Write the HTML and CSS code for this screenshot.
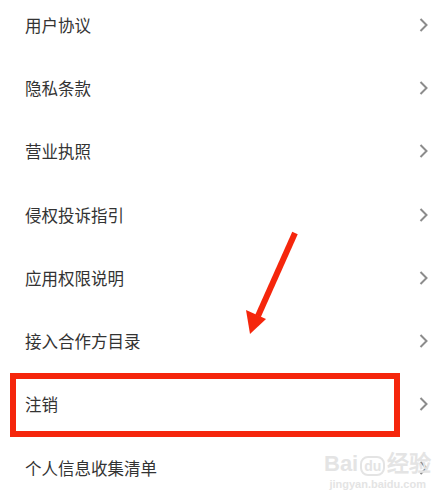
FILE: index.html
```html
<!DOCTYPE html>
<html lang="zh-CN">

<head>
    <meta charset="UTF-8">
    <meta name="viewport" content="width=device-width, initial-scale=1.0">
    <title>设置</title>
    <link rel="stylesheet" href="styles.css">
</head>

<body>
    <ul class="menu">
        <li class="menu-item"><span>用户协议</span><svg class="chevron" viewBox="0 0 9 14"><polyline points="1.5,1 7.5,7 1.5,13" /></svg></li>
        <li class="menu-item"><span>隐私条款</span><svg class="chevron" viewBox="0 0 9 14"><polyline points="1.5,1 7.5,7 1.5,13" /></svg></li>
        <li class="menu-item"><span>营业执照</span><svg class="chevron" viewBox="0 0 9 14"><polyline points="1.5,1 7.5,7 1.5,13" /></svg></li>
        <li class="menu-item"><span>侵权投诉指引</span><svg class="chevron" viewBox="0 0 9 14"><polyline points="1.5,1 7.5,7 1.5,13" /></svg></li>
        <li class="menu-item"><span>应用权限说明</span><svg class="chevron" viewBox="0 0 9 14"><polyline points="1.5,1 7.5,7 1.5,13" /></svg></li>
        <li class="menu-item"><span>接入合作方目录</span><svg class="chevron" viewBox="0 0 9 14"><polyline points="1.5,1 7.5,7 1.5,13" /></svg></li>
        <li class="menu-item"><span>注销</span><svg class="chevron" viewBox="0 0 9 14"><polyline points="1.5,1 7.5,7 1.5,13" /></svg></li>
        <li class="menu-item"><span>个人信息收集清单</span><svg class="chevron" viewBox="0 0 9 14"><polyline points="1.5,1 7.5,7 1.5,13" /></svg></li>
    </ul>

    <!-- annotation overlays -->
    <div class="highlight-box"></div>
    <svg class="arrow" width="443" height="501" viewBox="0 0 443 501">
        <line x1="295" y1="233" x2="258" y2="316" stroke="#f5260c" stroke-width="6" />
        <polygon points="250,334 246,310 266,319" fill="#f5260c" />
    </svg>

    <div class="watermark">
        <div class="wm-logo">Bai<span class="wm-du">du</span>经验</div>
        <div class="wm-url">jingyan.baidu.com</div>
    </div>
</body>

</html>
```

FILE: styles.css
```css
body {
    margin: 0;
    background: #fff;
    font-family: "Noto Sans CJK SC", "Noto Sans", sans-serif;
    overflow: hidden;
}

.menu {
    list-style-type: none;
    margin: -7px 0 0 0;
    padding: 0;
}

.menu-item {
    height: 63.3px;
    display: flex;
    align-items: center;
    justify-content: space-between;
    padding: 0 15px 0 25px;
    font-size: 16.5px;
    color: #333;
}

.chevron {
    width: 9px;
    height: 14px;
    fill: none;
    stroke: #8c8c8c;
    stroke-width: 2;
}

.highlight-box {
    position: absolute;
    left: 10px;
    top: 373px;
    width: 378px;
    height: 52px;
    border: 6px solid #f5260c;
}

.arrow {
    position: absolute;
    left: 0;
    top: 0;
}

.watermark {
    position: absolute;
    left: 324px;
    top: 452px;
    color: #e4e4e4;
    font-family: "Liberation Sans", sans-serif;
    text-align: center;
}

.wm-logo {
    font-size: 22px;
    font-weight: bold;
    line-height: 24px;
}

.wm-du {
    font-size: 14px;
    border: 2px solid #e4e4e4;
    border-radius: 8px;
    padding: 0 2px;
    margin: 0 2px;
}

.wm-url {
    font-size: 11px;
    font-weight: bold;
}
```
